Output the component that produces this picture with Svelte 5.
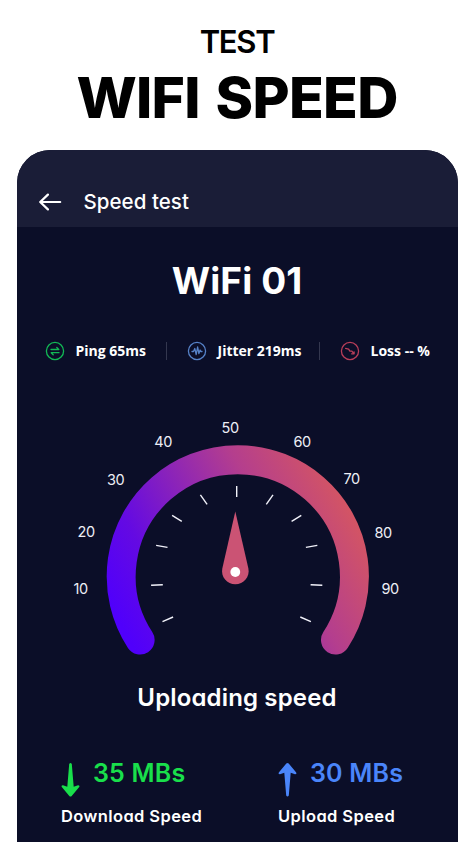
<script lang="ts">
  interface Label {
    value: number;
    x: number;
    y: number;
  }

  const labels: Label[] = [
    { value: 10, x: 64.5, y: 180 },
    { value: 20, x: 70, y: 123 },
    { value: 30, x: 99.5, y: 70.5 },
    { value: 40, x: 147, y: 33 },
    { value: 50, x: 214, y: 19 },
    { value: 60, x: 286, y: 33 },
    { value: 70, x: 335.5, y: 69.5 },
    { value: 80, x: 367, y: 123.5 },
    { value: 90, x: 374, y: 180 },
  ];

  // left half of the scale, mirrored for the right half
  const ticks = [
    [184.3, 85.8, 191, 95.3],
    [156, 106.4, 165.7, 112.3],
    [140, 136.4, 151.4, 138.4],
    [135, 176.2, 146.7, 175.7],
    [146.4, 212.6, 157, 208],
  ];
</script>

<main>
  <div class="kicker">TEST</div>
  <h1>WIFI SPEED</h1>

  <section class="phone">
    <header>
      <svg class="back" width="24" height="20" viewBox="0 0 24 20">
        <path d="M21.2 10H1.2M8.9 2.6L1.2 10l7.7 7.4" />
      </svg>
      <span class="title">Speed test</span>
    </header>

    <h2>WiFi 01</h2>

    <div class="stats">
      <div class="stat ping">
        <svg width="20" height="20" viewBox="0 0 20 20">
          <circle cx="10" cy="10" r="8.6" />
          <path d="M6 8.5h7.8M11.8 6.5l2 2M14 11.7H6.2M8.2 13.7l-2-2" />
        </svg>
        <span>Ping 65ms</span>
      </div>
      <div class="stat jitter">
        <svg width="20" height="20" viewBox="0 0 20 20">
          <circle cx="10" cy="10" r="8.6" />
          <path d="M5 10.5h1.5l1.3-3 1.4 6L10.6 6l1.3 6.5 1.2-3.5.7 1.5H15" />
        </svg>
        <span>Jitter 219ms</span>
      </div>
      <div class="stat loss">
        <svg width="20" height="20" viewBox="0 0 20 20">
          <circle cx="10" cy="10" r="8.6" />
          <path d="M5.6 7.3l3 .8 1.3 2 2 .1 1.8 2.3M11.6 12.8h2.5v-2" />
        </svg>
        <span>Loss -- %</span>
      </div>
    </div>

    <svg class="gauge" width="441" height="262" viewBox="0.9 0 441 262">
      <defs>
        <linearGradient id="arc" gradientUnits="userSpaceOnUse" x1="112" y1="228" x2="350" y2="98">
          <stop offset="0" stop-color="#5000fb" />
          <stop offset="0.2" stop-color="#640ae2" />
          <stop offset="0.66" stop-color="#b43e8e" />
          <stop offset="1" stop-color="#d9595c" />
        </linearGradient>
      </defs>
      <path class="arc" d="M124 231A116.6 116.6 0 1 1 319.4 231" />
      {#each labels as label}
        <text x={label.x} y={label.y + 5}>{label.value}</text>
      {/each}
      <path class="tick" d="M220.6 77v11" />
      {#each ticks as [x1, y1, x2, y2]}
        <line class="tick" {x1} {y1} {x2} {y2} />
        <line class="tick" x1={441.2 - x1} {y1} x2={441.2 - x2} {y2} />
      {/each}
      <path class="needle" d="M219.2 102.5L206.2 159.5C204.5 168 211 175.3 219.2 175.3S234 168 232.3 159.5Z" />
      <circle class="pivot" cx="219.2" cy="163" r="4.9" />
    </svg>

    <div class="status">Uploading speed</div>

    <div class="results">
      <div class="result down">
        <div class="value">
          <svg width="19" height="36" viewBox="0 0 19 36">
            <path d="M8.2 2Q9.5 0 10.8 2L12.7 24.8L17 23.2Q19.3 23.4 18 25.3L10.7 34Q9.5 35.2 8.3 34L1 25.3Q-.3 23.4 2 23.2L6.3 24.8Z" />
          </svg>
          <span>35 MBs</span>
        </div>
        <div class="caption">Download Speed</div>
      </div>
      <div class="result up">
        <div class="value">
          <svg width="19" height="36" viewBox="0 0 19 36">
            <path d="M8.2 33.5Q9.5 35.5 10.8 33.5L12.7 10.7L17 12.3Q19.3 12.1 18 10.2L10.7 1.5Q9.5 .3 8.3 1.5L1 10.2Q-.3 12.1 2 12.3L6.3 10.7Z" />
          </svg>
          <span>30 MBs</span>
        </div>
        <div class="caption">Upload Speed</div>
      </div>
    </div>
  </section>
</main>

<style>
  :global(body) {
    margin: 0;
    background: #fff;
  }

  main {
    width: 474px;
    height: 842px;
    overflow: hidden;
    box-sizing: border-box;
    padding-top: 22px;
    background: #fff;
    color: #000;
    font-family: Inter, "Open Sans", sans-serif;
    font-feature-settings: "cv11";
    text-align: center;
    white-space: nowrap;
  }

  .kicker {
    font-size: 31px;
    font-weight: 600;
    letter-spacing: -1.3px;
    line-height: 40px;
  }

  h1 {
    margin: 6px 0 0;
    font-size: 57px;
    font-weight: 800;
    letter-spacing: -0.7px;
    word-spacing: 4px;
    line-height: 60px;
  }

  .phone {
    height: 692px;
    margin: 22px 16.5px 0;
    border-radius: 33px 33px 0 0;
    background: #0b0e28;
    color: #fff;
    overflow: hidden;
  }

  header {
    display: flex;
    align-items: center;
    gap: 21px;
    height: 51px;
    padding: 26px 0 0 22px;
    background: #1a1d37;
  }

  .back path {
    fill: none;
    stroke: #fff;
    stroke-width: 2.2;
    stroke-linecap: round;
    stroke-linejoin: round;
  }

  .title {
    font-size: 20.5px;
    font-weight: 500;
    letter-spacing: 0.05px;
    line-height: 24px;
  }

  h2 {
    margin: 31px 0 0;
    font-size: 37px;
    font-weight: 700;
    letter-spacing: 0.1px;
    line-height: 46px;
  }

  .stats {
    display: flex;
    height: 20px;
    margin-top: 37px;
    padding-left: 28px;
    font-family: "Open Sans", "Noto Sans", sans-serif;
    font-size: 14px;
    font-weight: 700;
    line-height: 20px;
  }

  .stat {
    display: flex;
    align-items: center;
    gap: 11px;
  }

  .stat + .stat {
    padding-left: 21px;
    background: linear-gradient(#34374f, #34374f) 0 1px / 1px 18px no-repeat;
  }

  .ping {
    width: 121px;
  }

  .jitter {
    width: 132px;
  }

  .stat circle,
  .stat path {
    fill: none;
    stroke-width: 1.3;
    stroke-linecap: round;
    stroke-linejoin: round;
  }

  .ping svg {
    stroke: #12b955;
  }

  .jitter svg {
    stroke: #5682c8;
  }

  .loss svg {
    stroke: #b93e59;
  }

  .gauge {
    display: block;
    margin-top: 48px;
  }

  .gauge text {
    fill: #eeeef6;
    font-size: 14.5px;
    letter-spacing: -0.4px;
    text-anchor: middle;
  }

  .arc {
    fill: none;
    stroke: url(#arc);
    stroke-width: 29;
    stroke-linecap: round;
  }

  .tick {
    stroke: #f2f2fa;
    stroke-width: 1.4;
  }

  .needle {
    fill: #cb5374;
  }

  .pivot {
    fill: #fff;
  }

  .status {
    margin-top: 12px;
    font-size: 24px;
    font-weight: 600;
    letter-spacing: 0.15px;
    line-height: 30px;
  }

  .results {
    display: grid;
    grid-template-columns: 217px 1fr;
    margin-top: 47px;
    padding-left: 44.5px;
    text-align: left;
  }

  .value {
    display: flex;
    gap: 13px;
    height: 38px;
    font-size: 25px;
    font-weight: 600;
    letter-spacing: 0.2px;
    line-height: 26px;
  }

  .value svg {
    margin-top: 2px;
  }

  .down .value {
    color: #19df4b;
    fill: #19df4b;
  }

  .up .value {
    color: #4a85fa;
    fill: #4a85fa;
  }

  .caption {
    margin-top: 8px;
    font-size: 16.5px;
    font-weight: 600;
    letter-spacing: 0.4px;
    line-height: 20px;
  }
</style>
